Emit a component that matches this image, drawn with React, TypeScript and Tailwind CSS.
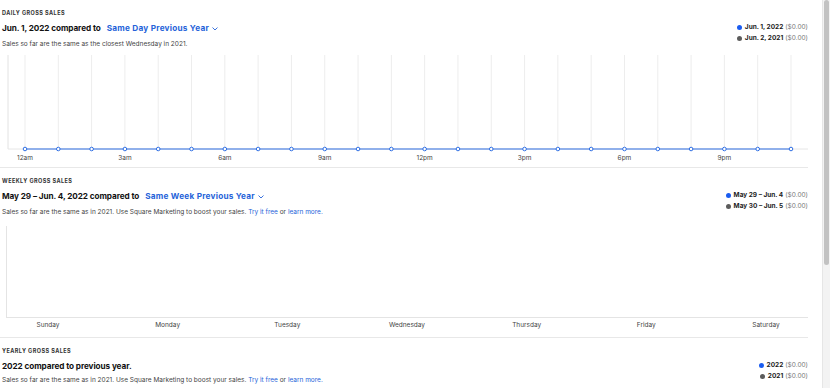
import React from "react";

const FONT = "font-['Inter',_'Liberation_Sans',_sans-serif]";
const BLUE = "#2563d9";

type LegendItem = { label: string; primary?: boolean };

function Chevron() {
  return (
    <svg width="6" height="4" viewBox="0 0 6 4" className="ml-[3px] mt-[2px] inline-block">
      <path d="M0.8 0.8 L3 3 L5.2 0.8" fill="none" stroke={BLUE} strokeWidth="0.9" strokeLinecap="round" />
    </svg>
  );
}

function Legend({ items }: { items: LegendItem[] }) {
  return (
    <div className="mt-[1px] flex flex-col items-end">
      {items.map((it) => (
        <div key={it.label} className="flex items-center text-[6.5px] leading-[11px]">
          <span className={`mr-[3px] h-[5px] w-[5px] rounded-full ${it.primary ? "bg-[#1a5cf0]" : "bg-[#5c5c5c]"}`} />
          <span className="font-bold text-[#1c1c1c]">{it.label}</span>
          <span className="ml-[2px] text-[#777]">($0.00)</span>
        </div>
      ))}
    </div>
  );
}

function SectionHeader({
  label,
  title,
  picker,
  note,
  legend,
  noteGap,
}: {
  label: string;
  title: string;
  picker?: string;
  note: React.ReactNode;
  legend: LegendItem[];
  noteGap: string;
}) {
  return (
    <div>
      <div className="pl-[2px] text-[5.5px] font-bold uppercase leading-[8px] tracking-[0.08em] text-[#333]">{label}</div>
      <div className="mt-[4px] flex items-start justify-between">
        <div className="pl-[2px]">
          <div className="flex items-center text-[8.2px] font-bold leading-[14px] tracking-[-0.01em] text-[#111]">
            <span>{title}</span>
            {picker ? (
              <span className="ml-[6px] flex items-center tracking-[0.03em] text-[#2563d9]">
                {picker}
                <Chevron />
              </span>
            ) : null}
          </div>
          <div className={`${noteGap} text-[6.5px] leading-[10px] text-[#444]`}>{note}</div>
        </div>
        <Legend items={legend} />
      </div>
    </div>
  );
}

const marketingNote = (
  <>
    Sales so far are the same as in 2021. Use Square Marketing to boost your sales.{" "}
    <span className="text-[#2563d9]">Try it free</span> or <span className="text-[#2563d9]">learn more.</span>
  </>
);

function DailyChart() {
  const xs = Array.from({ length: 24 }, (_, i) => 25 + (766 / 23) * i);
  const labels = ["12am", "3am", "6am", "9am", "12pm", "3pm", "6pm", "9pm"];
  return (
    <svg width="808" height="113" className="block">
      <line x1="8" y1="6" x2="8" y2="100" stroke="#e2e2e2" strokeWidth="1" />
      {xs.map((x) => (
        <line key={x} x1={x} y1="6" x2={x} y2="100" stroke="#ededed" strokeWidth="1" />
      ))}
      <line x1="8" y1="100" x2="808" y2="100" stroke="#e6e6e6" strokeWidth="1" />
      <line x1={xs[0]} y1="100" x2={xs[23]} y2="100" stroke="#2f6fe4" strokeWidth="1.2" />
      {xs.map((x) => (
        <circle key={`d${x}`} cx={x} cy="100" r="1.8" fill="#fff" stroke="#2f6fe4" strokeWidth="1" />
      ))}
      {labels.map((l, i) => (
        <text
          key={l}
          x={xs[i * 3]}
          y="110.5"
          textAnchor="middle"
          fontSize="6.5"
          fill="#444"
          fontFamily="Inter, 'Liberation Sans', sans-serif"
        >
          {l}
        </text>
      ))}
    </svg>
  );
}

function WeeklyChart() {
  const days = ["Sunday", "Monday", "Tuesday", "Wednesday", "Thursday", "Friday", "Saturday"];
  return (
    <div>
      <div className="ml-[6px] mt-[9px] h-[92px] border-b border-l border-[#e4e4e4]" />
      <div className="mt-[2px] flex justify-between pl-[48px] pr-[42px]">
        {days.map((d) => (
          <div key={d} className="flex w-0 justify-center">
            <span className="whitespace-nowrap text-[6.5px] leading-[10px] text-[#444]">{d}</span>
          </div>
        ))}
      </div>
    </div>
  );
}

export default function App() {
  return (
    <div className={`flex h-[388px] w-[830px] overflow-hidden bg-white ${FONT}`}>
      <div className="flex-1 pr-[14px] pt-[9px]">
        <SectionHeader
          label="Daily Gross Sales"
          title="Jun. 1, 2022 compared to"
          picker="Same Day Previous Year"
          note="Sales so far are the same as the closest Wednesday in 2021."
          legend={[{ label: "Jun. 1, 2022", primary: true }, { label: "Jun. 2, 2021" }]}
          noteGap="mt-[4px]"
        />
        <DailyChart />
        <div className="mt-[5px] border-t border-[#e8e8e8]" />

        <div className="mt-[9px]">
          <SectionHeader
            label="Weekly Gross Sales"
            title="May 29 – Jun. 4, 2022 compared to"
            picker="Same Week Previous Year"
            note={marketingNote}
            legend={[{ label: "May 29 – Jun. 4", primary: true }, { label: "May 30 – Jun. 5" }]}
            noteGap="mt-[4px]"
          />
        </div>
        <WeeklyChart />
        <div className="mt-[7px] border-t border-[#e8e8e8]" />

        <div className="mt-[9px]">
          <SectionHeader
            label="Yearly Gross Sales"
            title="2022 compared to previous year."
            note={marketingNote}
            legend={[{ label: "2022", primary: true }, { label: "2021" }]}
            noteGap="mt-[2px]"
          />
        </div>
      </div>
      <div className="flex w-[8px] flex-col border-l border-[#e6e6e6] bg-[#f3f3f3]">
        <div className="mx-[1px] h-[265px] rounded-[3px] bg-[#c2c2c2]" />
      </div>
    </div>
  );
}
